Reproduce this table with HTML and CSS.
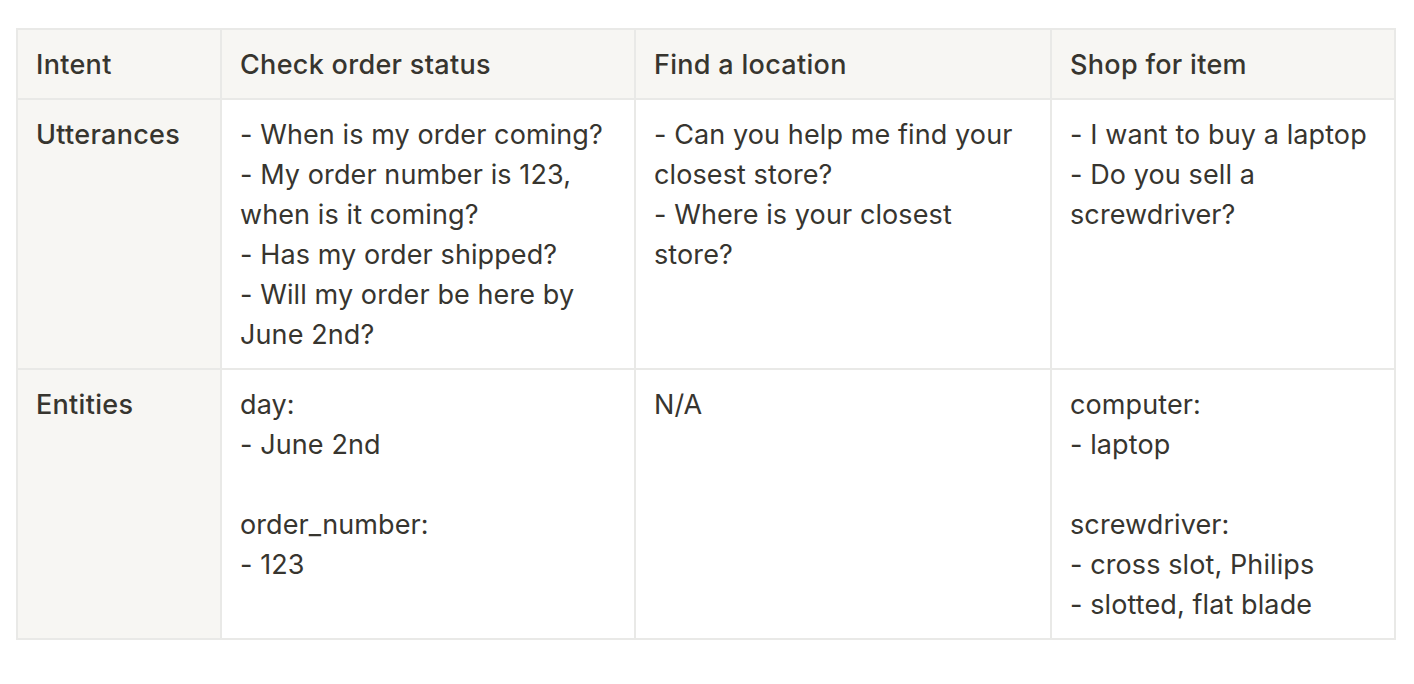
FILE: index.html
```html
<!DOCTYPE html>
<html>
<head>
<meta charset="utf-8">
<link rel="stylesheet" href="styles.css">
</head>
<body>
<div class="page">
<table class="intents">
  <colgroup>
    <col class="c1"><col class="c2"><col class="c3"><col class="c4">
  </colgroup>
  <thead>
    <tr>
      <th>Intent</th>
      <th>Check order status</th>
      <th>Find a location</th>
      <th>Shop for item</th>
    </tr>
  </thead>
  <tbody>
    <tr>
      <th>Utterances</th>
      <td>- When is my order coming?<br>- My order number is 123, when is it coming?<br>- Has my order shipped?<br>- Will my order be here by June 2nd?</td>
      <td>- Can you help me find your closest store?<br>- Where is your closest store?</td>
      <td>- I want to buy a laptop<br>- Do you sell a screwdriver?</td>
    </tr>
    <tr>
      <th>Entities</th>
      <td>day:<br>- June 2nd<br><br>order_number:<br>- 123</td>
      <td>N/A</td>
      <td>computer:<br>- laptop<br><br>screwdriver:<br>- cross slot, Philips<br>- slotted, flat blade</td>
    </tr>
  </tbody>
</table>
</div>
</body>
</html>
```

FILE: styles.css
```css
html, body {
  margin: 0;
  padding: 0;
  background: #ffffff;
}

.page {
  padding: 28px 0 0 16px;
}

.intents {
  border-collapse: collapse;
  table-layout: fixed;
  width: 1378px;
  font-family: Inter, "Noto Sans", sans-serif;
  font-size: 27px;
  line-height: 40px;
  color: #37352f;
}

.c1 { width: 204px; }
.c2 { width: 414px; }
.c3 { width: 416px; }
.c4 { width: 344px; }

.intents th,
.intents td {
  border: 2px solid #e9e9e7;
  padding: 15px 18px 13px;
  text-align: left;
  vertical-align: top;
}

.intents th {
  font-weight: 500;
  letter-spacing: 0.3px;
  background: #f7f6f3;
}

.intents td {
  font-weight: 400;
  letter-spacing: 0.1px;
  background: #ffffff;
}
```
